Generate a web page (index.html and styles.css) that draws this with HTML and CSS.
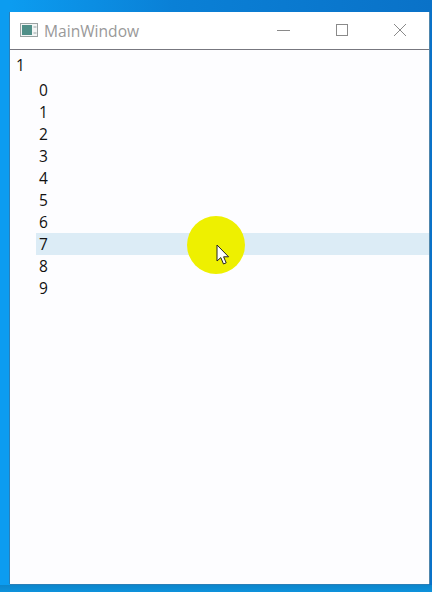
FILE: index.html
```html
<!DOCTYPE html>
<html lang="en">
<head>
<meta charset="utf-8">
<title>MainWindow</title>
<link rel="stylesheet" href="styles.css">
</head>
<body>
<div class="window">
  <header class="titlebar">
    <svg class="app-icon" width="20" height="16" viewBox="0 0 20 16">
      <rect x="0.5" y="0.5" width="17" height="13" fill="#f2f4f4" stroke="#9aa2a2"/>
      <rect x="2" y="2" width="10" height="10" fill="#4f8f88"/>
      <rect x="13.5" y="3" width="3" height="2" fill="#c4cccc"/>
      <rect x="13.5" y="9" width="3" height="2" fill="#c4cccc"/>
    </svg>
    <span class="title">MainWindow</span>
    <div class="controls">
      <svg class="ctl" width="58" height="14" viewBox="0 0 58 14"><path d="M22 6.5H35" stroke="#8a8a8a" fill="none"/></svg>
      <svg class="ctl" width="58" height="14" viewBox="0 0 58 14"><rect x="23.5" y="0.5" width="11" height="11" stroke="#8a8a8a" fill="none"/></svg>
      <svg class="ctl" width="58" height="14" viewBox="0 0 58 14"><path d="M23 0L35 12M35 0L23 12" stroke="#8a8a8a" fill="none"/></svg>
    </div>
  </header>
  <main class="tree">
    <div class="root">1</div>
    <ul class="items">
      <li>0</li>
      <li>1</li>
      <li>2</li>
      <li>3</li>
      <li>4</li>
      <li>5</li>
      <li>6</li>
      <li class="hover">7</li>
      <li>8</li>
      <li>9</li>
    </ul>
  </main>
</div>
<div class="spot"></div>
<svg class="cursor" width="15" height="22" viewBox="0 0 15 22">
  <path d="M1 1V17L4.8 13.6L7.5 20L10.2 18.8L7.6 12.8H12.6Z" fill="#fff" stroke="#222" stroke-width="1"/>
</svg>
</body>
</html>
```
FILE: styles.css
```css
html, body {
  margin: 0;
  height: 100%;
}
body {
  position: relative;
  width: 432px;
  height: 592px;
  overflow: hidden;
  background:
    linear-gradient(180deg, transparent 585px, #0c86cc 585px, #0e92dc 100%),
    linear-gradient(90deg, #0c9cf0 0, #0c9cf0 10px, #0a80d6 40%, #0a72c8 100%);
  font-family: "Open Sans", "Noto Sans", sans-serif;
  color: #111;
}
.window {
  box-sizing: border-box;
  margin-left: 10px;
  position: absolute;
  top: 12px;
  width: 419px;
  height: 572px;
  background: #fdfdff;
  box-shadow: -1px 0 0 #2a7fb8, 1px 0 0 #4f86ac, 0 1px 0 #2a7fb8;
}
.titlebar {
  box-sizing: border-box;
  height: 38px;
  display: flex;
  align-items: center;
  padding-left: 10px;
  background: #fff;
  border-bottom: 1px solid #77777f;
}
.app-icon {
  flex: none;
}
.title {
  margin-left: 4px;
  font-size: 15.6px;
  color: #999;
}
.controls {
  margin-left: auto;
  display: flex;
}
.ctl {
  display: block;
}
.tree {
  font-size: 15.5px;
  line-height: 22px;
}
.root {
  padding: 4px 0 3px 6px;
  height: 22px;
}
.items {
  list-style: none;
  margin: 0;
  padding: 0 0 0 26px;
}
.items li {
  height: 22px;
  padding-left: 3px;
}
.hover {
  background: #dcecf6;
}
.spot {
  position: absolute;
  left: 187px;
  top: 216px;
  width: 58px;
  height: 58px;
  border-radius: 50%;
  background: #eef000;
}
.cursor {
  position: absolute;
  left: 216px;
  top: 244px;
}
```
